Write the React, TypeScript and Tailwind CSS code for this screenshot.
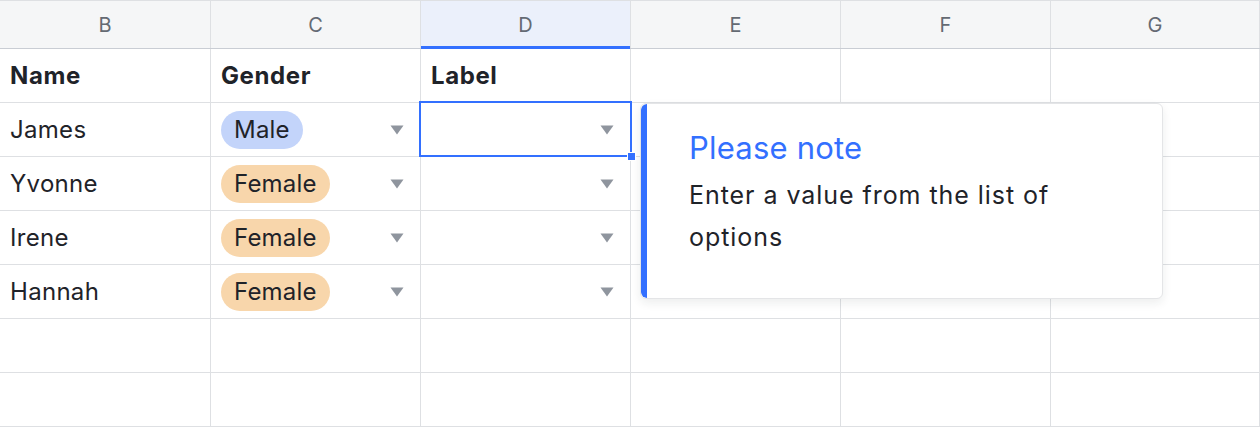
import React from "react";

const cols = ["B", "C", "D", "E", "F", "G"];
const widths = ["w-[211px]", "w-[210px]", "w-[210px]", "w-[210px]", "w-[210px]", "w-[209px]"];

function Tri() {
  return (
    <svg width="14" height="10" viewBox="0 0 14 10" className="shrink-0">
      <path d="M0.5 0.5 H13.5 L7 9.5 Z" fill="#8f959e" />
    </svg>
  );
}

type Row = { name: string; gender: string } | null;

const rows: Row[] = [
  { name: "James", gender: "Male" },
  { name: "Yvonne", gender: "Female" },
  { name: "Irene", gender: "Female" },
  { name: "Hannah", gender: "Female" },
  null,
  null,
];

function Pill({ g }: { g: string }) {
  const male = g === "Male";
  return (
    <span
      className={
        "inline-flex h-[38px] items-center rounded-full px-[13px] text-[24px] tracking-[0.2px] text-[#1f2329] " +
        (male ? "bg-[#c3d4fa]" : "bg-[#f8d6ab]")
      }
    >
      {g}
    </span>
  );
}

export default function App() {
  return (
    <div
      className="relative h-[428px] w-[1260px] overflow-hidden bg-white"
      style={{ fontFamily: "Inter, 'Noto Sans', sans-serif" }}
    >
      {/* header */}
      <div className="flex h-[49px] border-y border-t-[#dee0e3] border-b-[#c9cdd4] bg-[#f5f6f7]">
        {cols.map((c, i) => (
          <div
            key={c}
            className={
              widths[i] +
              " relative flex items-center justify-center border-r border-[#dee0e3] text-[20px] text-[#646a73] " +
              (c === "D" ? "bg-[#ebf0fb]" : "")
            }
          >
            {c}
            {c === "D" && <div className="absolute bottom-[-1px] left-0 right-0 h-[3px] bg-[#3370ff]" />}
          </div>
        ))}
      </div>
      {/* title row */}
      <div className="flex h-[54px] border-b border-[#dee0e3]">
        {["Name", "Gender", "Label", "", "", ""].map((t, i) => (
          <div
            key={i}
            className={
              widths[i] +
              " flex items-center border-r border-[#dee0e3] px-[10px] text-[24px] font-bold tracking-[0.6px] text-[#1f2329]"
            }
          >
            {t}
          </div>
        ))}
      </div>
      {rows.map((r, ri) => (
        <div key={ri} className="flex h-[54px] border-b border-[#dee0e3]">
          {cols.map((c, i) => (
            <div
              key={c}
              className={
                widths[i] +
                " relative flex items-center border-r border-[#dee0e3] px-[10px] text-[24px] tracking-[0.3px] text-[#1f2329]"
              }
            >
              {r && i === 0 && r.name}
              {r && i === 1 && (
                <div className="flex w-full items-center justify-between">
                  <Pill g={r.gender} />
                  <span className="mr-[6px]">
                    <Tri />
                  </span>
                </div>
              )}
              {r && i === 2 && (
                <div className="flex w-full items-center justify-end">
                  <span className="mr-[6px]">
                    <Tri />
                  </span>
                </div>
              )}
              {ri === 0 && i === 2 && (
                <>
                  <div className="absolute left-[-2px] right-[-2px] top-[-2px] bottom-[-1px] border-2 border-[#3370ff]" />
                  <div className="absolute bottom-[-5px] right-[-6px] z-10 h-[9px] w-[9px] border border-white bg-[#3370ff]" />
                </>
              )}
            </div>
          ))}
        </div>
      ))}
      {/* tooltip */}
      <div className="absolute left-[640px] top-[103px] flex h-[196px] w-[523px] overflow-hidden rounded-[6px] border border-[#e4e5e7] bg-white shadow-[0_4px_10px_rgba(31,35,41,0.08)]">
        <div className="w-[6px] shrink-0 rounded-l-[6px] bg-[#3370ff]" />
        <div className="pl-[42px] pr-[30px] pt-[24px]">
          <div className="text-[31px] leading-[40px] tracking-[0.2px] text-[#3370ff]">Please note</div>
          <div className="mt-[6px] w-[400px] text-[25px] leading-[42px] tracking-[0.95px] text-[#1f2329]">
            Enter a value from the list of options
          </div>
        </div>
      </div>
    </div>
  );
}
